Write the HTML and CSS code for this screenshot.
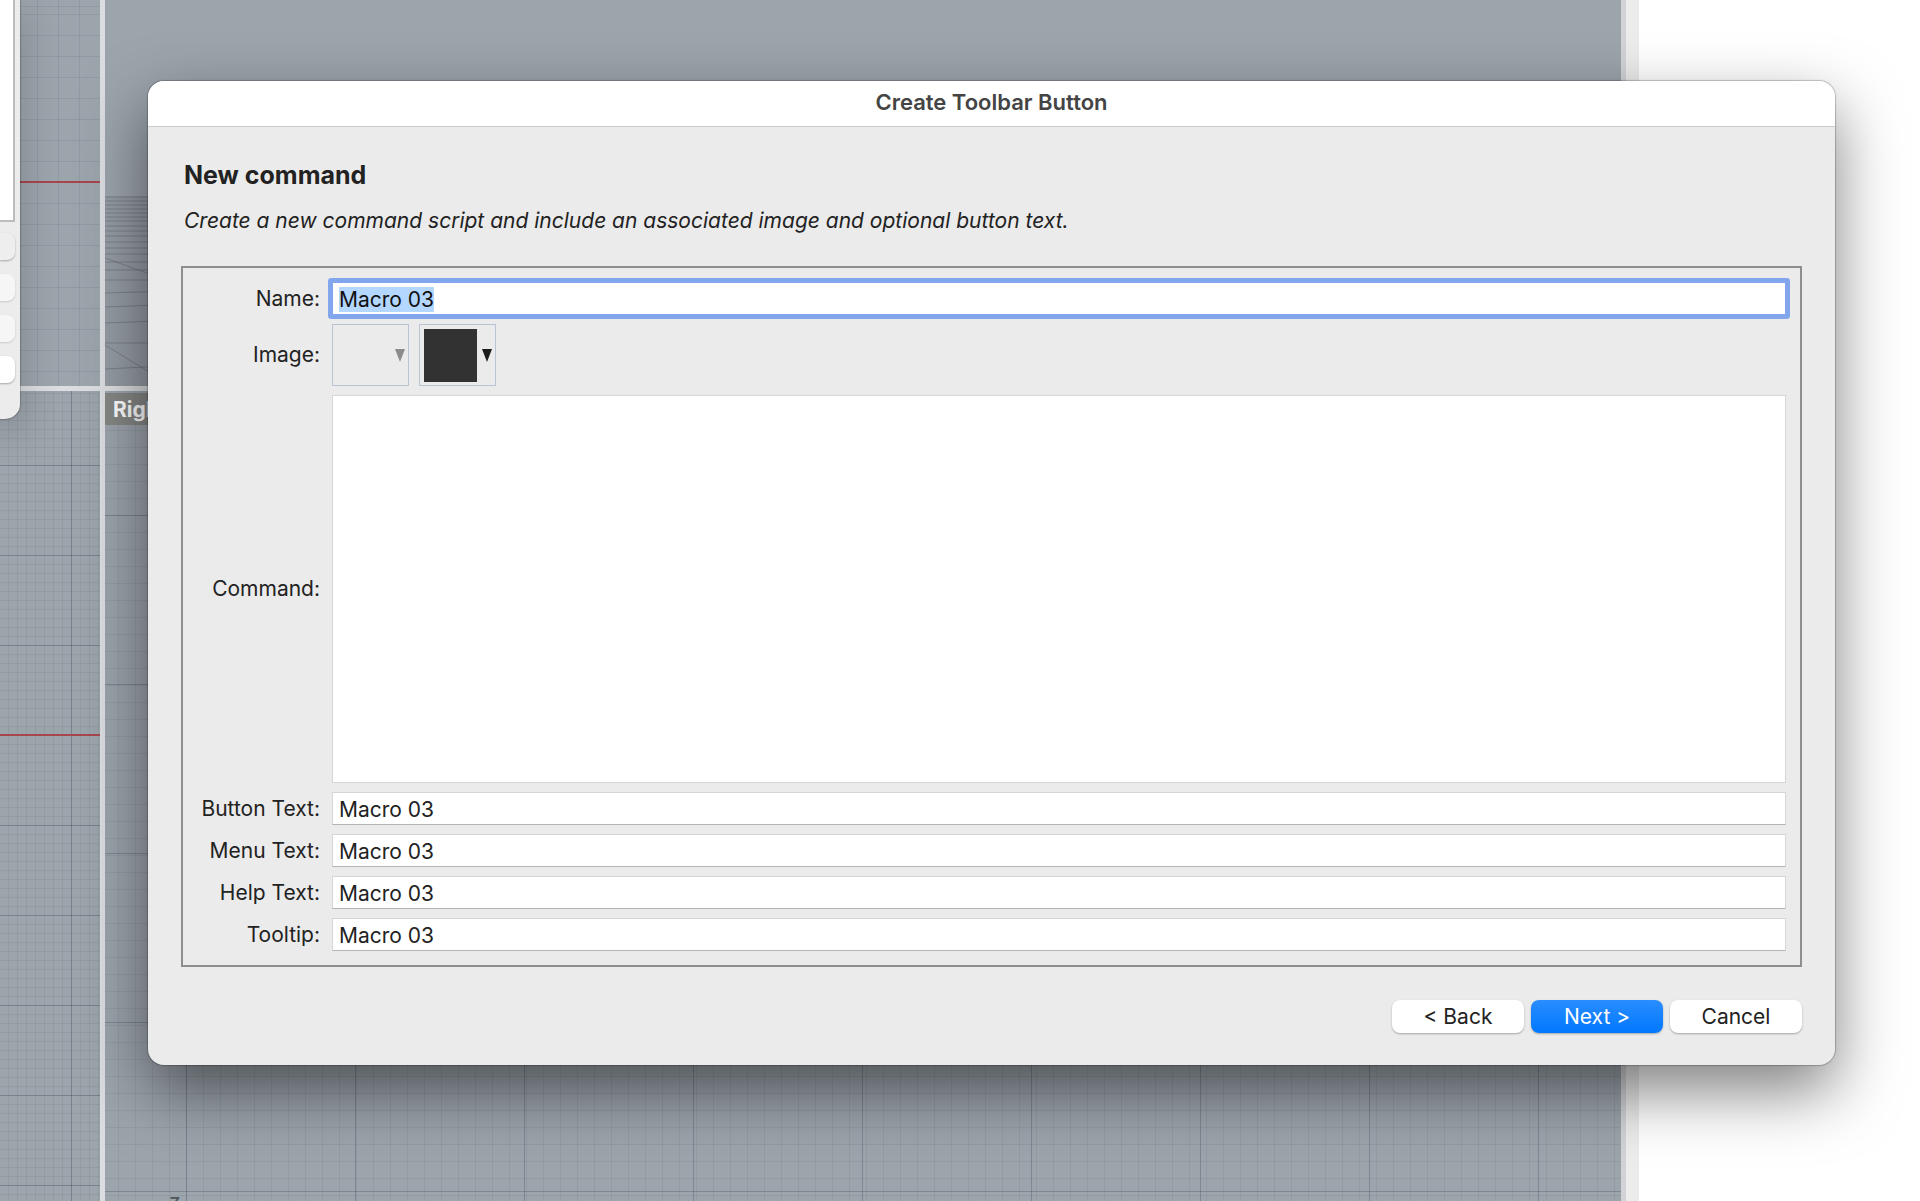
FILE: index.html
```
<!DOCTYPE html>
<html lang="en">
<head>
    <meta charset="UTF-8">
    <meta name="viewport" content="width=device-width, initial-scale=1.0">
    <title>Create Toolbar Button</title>
    <link rel="stylesheet" href="styles.css">
</head>
<body>
    <!-- Modeling viewports behind the dialog -->
    <div class="workspace">
        <div class="viewports">
            <div class="viewport viewport-top"></div>
            <div class="viewport viewport-perspective">
                <svg class="ground" width="100" height="190" viewBox="0 0 100 190" fill="none" stroke="#5f666d" stroke-opacity="0.5">
                    <path d="M0 1h100M0 5h100M0 9h100M0 13h100M0 17h100M0 21h100M0 25h100M0 30h100M0 35h100M0 40h100M0 46h100M0 52h100M0 58h100M0 66h100M0 74h100M0 84h100M0 97l100-3M0 111l100-4M0 127l100-4M0 147h100M0 173l100-5"/>
                    <path d="M0 62l100 36M0 149l100 61"/>
                </svg>
            </div>
            <div class="viewport viewport-front"></div>
            <div class="viewport viewport-right">
                <span class="viewport-label">Right</span>
                <span class="axis-label">z</span>
            </div>
        </div>
        <div class="side-panel"></div>
    </div>

    <!-- Panel window at the left edge -->
    <div class="panel-window">
        <div class="panel-list"></div>
        <div class="panel-buttons">
            <span class="panel-button off"></span>
            <span class="panel-button dim"></span>
            <span class="panel-button dim"></span>
            <span class="panel-button"></span>
        </div>
    </div>

    <!-- Dialog -->
    <form class="dialog" role="dialog" aria-labelledby="dialog-title" onsubmit="return false">
        <header class="title-bar" id="dialog-title">Create Toolbar Button</header>
        <div class="dialog-body">
            <h1>New command</h1>
            <p class="description">Create a new command script and include an associated image and optional button text.</p>

            <div class="fields">
                <label for="name">Name:</label>
                <input type="text" id="name" value="Macro 03">

                <label for="image-light">Image:</label>
                <div class="image-row">
                    <button type="button" class="image-button" id="image-light" aria-label="Light image" disabled>
                        <span class="swatch"></span>
                        <svg width="10" height="13" viewBox="0 0 10 13"><path d="M0 0h10L5 13z" fill="currentColor"/></svg>
                    </button>
                    <button type="button" class="image-button" aria-label="Dark image">
                        <span class="swatch swatch-dark"></span>
                        <svg width="10" height="13" viewBox="0 0 10 13"><path d="M0 0h10L5 13z" fill="currentColor"/></svg>
                    </button>
                </div>

                <label for="command">Command:</label>
                <textarea id="command"></textarea>

                <label for="button-text">Button Text:</label>
                <input type="text" id="button-text" value="Macro 03">

                <label for="menu-text">Menu Text:</label>
                <input type="text" id="menu-text" value="Macro 03">

                <label for="help-text">Help Text:</label>
                <input type="text" id="help-text" value="Macro 03">

                <label for="tooltip">Tooltip:</label>
                <input type="text" id="tooltip" value="Macro 03">
            </div>

            <div class="actions">
                <button type="button" class="btn">&lt; Back</button>
                <button type="submit" class="btn btn-primary">Next &gt;</button>
                <button type="button" class="btn">Cancel</button>
            </div>
        </div>
    </form>

    <script>
        // Start with the name ready to be typed over
        document.getElementById('name').select();
    </script>
</body>
</html>
```
FILE: styles.css
```
* {
    box-sizing: border-box;
}

body {
    margin: 0;
    height: 100vh;
    overflow: hidden;
    position: relative;
    background: white;
    color: #222;
    font-family: Inter, "Liberation Sans", sans-serif;
    font-size: 21px;
}

/* Viewports */
.workspace {
    display: flex;
    height: 100%;
}

.viewports {
    flex: 1;
    display: grid;
    grid-template-columns: 100px 1fr;
    grid-template-rows: 386px 1fr;
    gap: 5px;
    background: #dcdde0;
    border-right: 5px solid #d2d3d7;
}

.side-panel {
    width: 294px;
    border-left: 13px solid #ececed;
}

.viewport {
    position: relative;
    overflow: hidden;
    background-color: #9ca4ac;
}

.viewport-top {
    background-image:
        linear-gradient(#a8464e, #a8464e),
        repeating-linear-gradient(rgba(70,80,90,0.13) 0 1px, transparent 1px 21px),
        repeating-linear-gradient(90deg, rgba(70,80,90,0.13) 0 1px, transparent 1px 21px);
    background-size: 100% 2px, auto, auto;
    background-position: 0 181px, 0 14px, 16px 0;
    background-repeat: no-repeat, repeat, repeat;
}

.ground {
    position: absolute;
    left: 0;
    top: 196px;
    background: rgba(90,96,102,0.12);
}

.viewport-front {
    background-image:
        linear-gradient(#a8464e, #a8464e),
        repeating-linear-gradient(rgba(60,70,80,0.3) 0 1px, transparent 1px 90px),
        linear-gradient(90deg, rgba(60,70,80,0.3), rgba(60,70,80,0.3)),
        repeating-linear-gradient(rgba(70,80,90,0.1) 0 1px, transparent 1px 9px),
        repeating-linear-gradient(90deg, rgba(70,80,90,0.1) 0 1px, transparent 1px 9px);
    background-size: 100% 2px, 100% 90px, 1px 100%, 100% 9px, 9px 100%;
    background-position: 0 343px, 0 74px, 71px 0, 0 2px, 8px 0;
    background-repeat: no-repeat, repeat, no-repeat, repeat, repeat;
}

.viewport-right {
    background-image:
        linear-gradient(rgba(60,70,80,0.3) 1px, transparent 1px),
        linear-gradient(90deg, rgba(60,70,80,0.3) 1px, transparent 1px),
        linear-gradient(rgba(70,80,90,0.1) 1px, transparent 1px),
        linear-gradient(90deg, rgba(70,80,90,0.1) 1px, transparent 1px);
    background-size: 100% 169px, 169px 100%, 100% 17px, 17px 100%;
    background-position: 0 124px, 81px 0, 0 5px, 13px 0;
}

.viewport-label {
    position: absolute;
    left: 0;
    top: 2px;
    padding: 1px 8px 0;
    background: #858785;
    color: white;
    font-size: 21px;
    font-weight: 700;
    line-height: 31px;
}

.axis-label {
    position: absolute;
    left: 64px;
    bottom: -13px;
    color: #4c545c;
    font-size: 21px;
    line-height: 24px;
}

/* Panel window */
.panel-window {
    position: absolute;
    left: 0;
    top: 0;
    width: 20px;
    height: 419px;
    background: #ececec;
    border-radius: 0 0 15px 0;
    box-shadow: 0 0 1px 1px rgba(0,0,0,0.2), 0 12px 36px rgba(0,0,0,0.25);
}

.panel-list {
    width: 15px;
    height: 222px;
    background: white;
    border: solid #bcbcbc;
    border-width: 0 2px 2px 0;
}

.panel-buttons {
    display: grid;
    gap: 14px;
    padding-top: 11px;
    width: 15px;
}

.panel-button {
    height: 27px;
    background: white;
    border-radius: 0 8px 8px 0;
    box-shadow: 0 1px 2px rgba(0,0,0,0.3);
}

.panel-button.dim {
    background: #f6f6f6;
    box-shadow: 0 1px 2px rgba(0,0,0,0.15);
}

.panel-button.off {
    background: #eee;
}

/* Dialog */
.dialog {
    position: absolute;
    left: 148px;
    right: 85px;
    top: 81px;
    background: #ebebeb;
    border-radius: 16px;
    box-shadow: 0 0 1px 1px rgba(0,0,0,0.22), 0 26px 64px rgba(0,0,0,0.5);
}

.title-bar {
    height: 46px;
    background: white;
    border-bottom: 1px solid #cacaca;
    border-radius: 16px 16px 0 0;
    color: #444;
    font-size: 22px;
    font-weight: 600;
    line-height: 43px;
    text-align: center;
}

.dialog-body {
    padding: 32px 33px;
}

h1 {
    margin: 0 3px 16px;
    font-size: 25px;
    font-weight: 700;
    line-height: 32px;
}

.description {
    margin: 0 3px 31px;
    font-style: italic;
    line-height: 28px;
}

.fields {
    display: grid;
    grid-template-columns: 137px 1fr;
    column-gap: 12px;
    row-gap: 9px;
    align-items: center;
    padding: 14px;
    padding-left: 0;
    border: 2px solid #8e8e8e;
}

.fields label {
    text-align: right;
    white-space: nowrap;
    line-height: 28px;
}

.fields input,
.fields textarea {
    width: 100%;
    margin: 0;
    background: white;
    border: 1px solid #d6d6d6;
    border-radius: 0;
    outline: none;
    padding: 0 6px;
    color: #222;
    font: inherit;
}

.fields input {
    height: 33px;
    border-bottom-color: #b4b4b4;
    padding-top: 2px;
}

.fields input:focus {
    border-color: #82a6ee;
    box-shadow: 0 0 0 4px #82a6ee;
    border-radius: 1px;
}

.fields input::selection {
    background: #b3d7ff;
    color: #111;
}

.fields textarea {
    height: 388px;
    resize: none;
}

.image-row {
    display: flex;
    gap: 10px;
}

.image-button {
    display: flex;
    align-items: center;
    gap: 5px;
    width: 77px;
    height: 62px;
    padding: 0 4px;
    background: transparent;
    border: 1px solid #b8c3d4;
    color: #1c1c1c;
}

.image-button:disabled {
    color: #8c8c8c;
}

.image-button svg {
    flex-shrink: 0;
}

.swatch {
    flex-shrink: 0;
    width: 53px;
    height: 53px;
}

.swatch-dark {
    background: #323232;
}

.actions {
    display: flex;
    justify-content: flex-end;
    gap: 7px;
    margin-top: 33px;
}

.btn {
    width: 132px;
    height: 33px;
    padding: 0;
    background: white;
    border: none;
    border-radius: 8px;
    box-shadow: 0 1px 2px rgba(0,0,0,0.3);
    color: #222;
    font: inherit;
    line-height: 32px;
}

.btn-primary {
    background: linear-gradient(#2a8dff, #0078ff);
    color: white;
}
```
